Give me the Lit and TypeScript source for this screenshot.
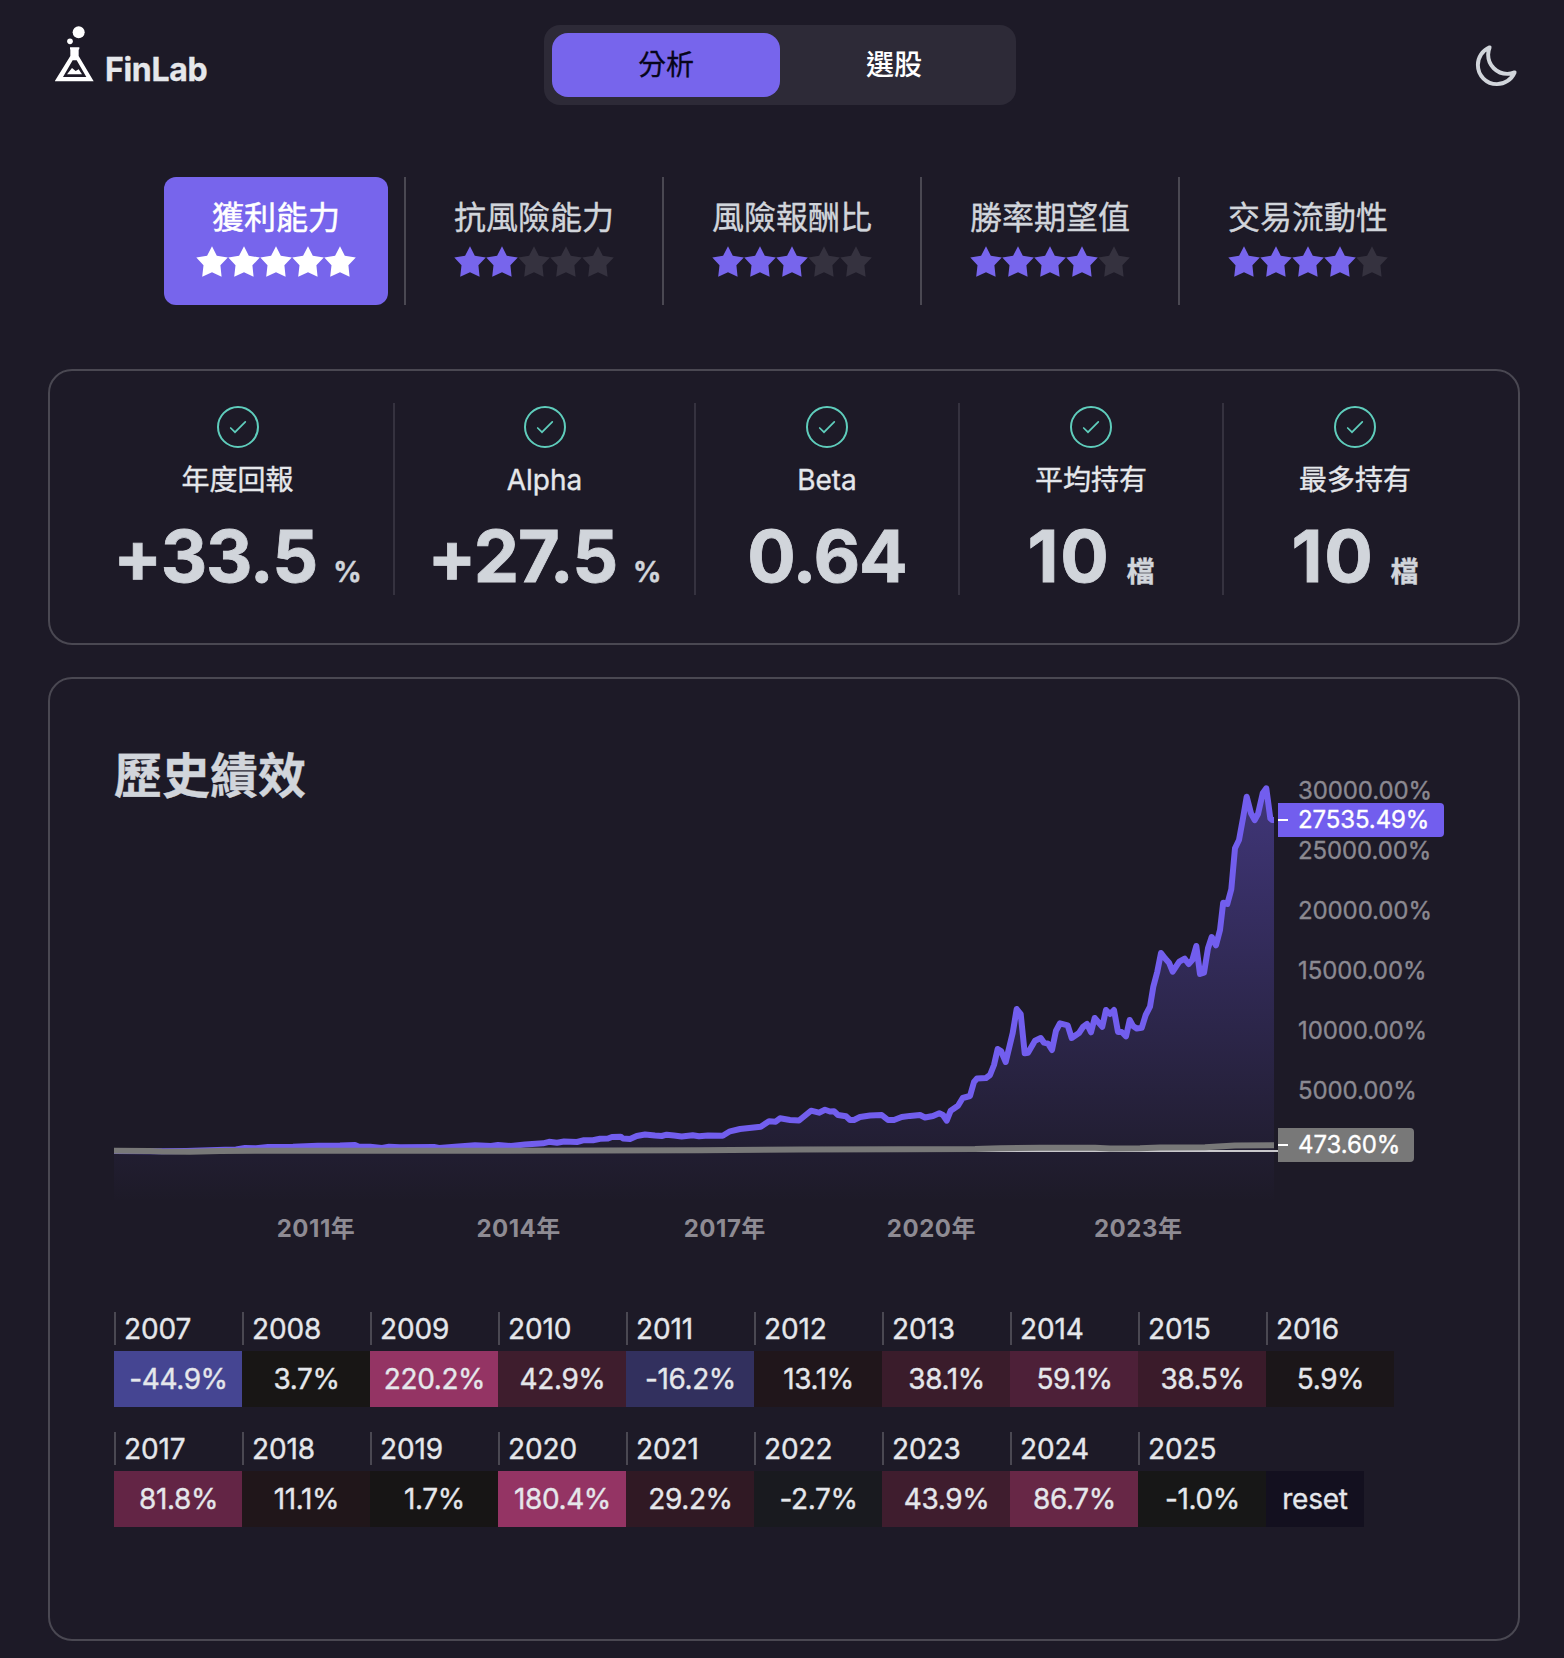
import { LitElement, html, svg, css } from "lit";
import { customElement, property } from "lit/decorators.js";
import { classMap } from "lit/directives/class-map.js";
import { styleMap } from "lit/directives/style-map.js";

type Point = [number, number];

interface Rating { name: string; stars: number; active?: boolean }
interface Stat { label: string; value: string; unit?: string }
interface Year { year: string; value: string; color: string }

const RATINGS: Rating[] = [
  { name: "獲利能力", stars: 5, active: true },
  { name: "抗風險能力", stars: 2 },
  { name: "風險報酬比", stars: 3 },
  { name: "勝率期望值", stars: 4 },
  { name: "交易流動性", stars: 4 },
];

const STATS: Stat[] = [
  { label: "年度回報", value: "+33.5", unit: "%" },
  { label: "Alpha", value: "+27.5", unit: "%" },
  { label: "Beta", value: "0.64" },
  { label: "平均持有", value: "10", unit: "檔" },
  { label: "最多持有", value: "10", unit: "檔" },
];

const YEARS: Year[] = [
  { year: "2007", value: "-44.9%", color: "#454592" },
  { year: "2008", value: "3.7%", color: "#181615" },
  { year: "2009", value: "220.2%", color: "#943464" },
  { year: "2010", value: "42.9%", color: "#3e1d2d" },
  { year: "2011", value: "-16.2%", color: "#32305e" },
  { year: "2012", value: "13.1%", color: "#20161b" },
  { year: "2013", value: "38.1%", color: "#3a1c2b" },
  { year: "2014", value: "59.1%", color: "#4d2038" },
  { year: "2015", value: "38.5%", color: "#3a1b2a" },
  { year: "2016", value: "5.9%", color: "#1b1619" },
  { year: "2017", value: "81.8%", color: "#632545" },
  { year: "2018", value: "11.1%", color: "#20161a" },
  { year: "2019", value: "1.7%", color: "#171515" },
  { year: "2020", value: "180.4%", color: "#943464" },
  { year: "2021", value: "29.2%", color: "#301924" },
  { year: "2022", value: "-2.7%", color: "#191a1f" },
  { year: "2023", value: "43.9%", color: "#3f1d2e" },
  { year: "2024", value: "86.7%", color: "#672746" },
  { year: "2025", value: "-1.0%", color: "#171717" },
];

const AXIS = ["30000.00%", "25000.00%", "20000.00%", "15000.00%", "10000.00%", "5000.00%"];

const TIMES: [number, string][] = [
  [316, "2011年"], [518.6, "2014年"], [724.8, "2017年"], [931.4, "2020年"], [1138.2, "2023年"],
];

const STRATEGY: Point[] = [
  [114, 1151], [162, 1151.3], [186, 1151], [225, 1149.7], [236, 1149.5], [245, 1148], [256, 1148.3], [268, 1147],
  [293, 1146.8], [318, 1145.7], [340, 1145.5], [355, 1145], [359, 1146.7], [370, 1146.8], [382, 1148],
  [389, 1146.8], [400, 1147.2], [434, 1147], [439, 1148], [455, 1146.8], [475, 1145.3], [491, 1146],
  [498, 1145], [511, 1146], [525, 1144.5], [543, 1143.3], [549, 1141.8], [557, 1142.7], [564, 1141.5],
  [577, 1142], [584, 1140.2], [593, 1140.2], [600, 1138.7], [608, 1138.5], [612, 1137], [620.7, 1136.7],
  [623, 1138.5], [630, 1139], [636.7, 1136], [645, 1134.5], [655, 1135.5], [661.7, 1136], [666.7, 1134.7],
  [674, 1135.5], [681.7, 1136.5], [692.7, 1135.3], [699, 1136.3], [708, 1135.5], [722.7, 1135.7],
  [730, 1131.3], [740, 1129], [760.7, 1126.7], [769, 1121.3], [775.7, 1121.7], [780, 1118.3], [790, 1120],
  [799, 1120.5], [811, 1110.7], [819, 1112.7], [825, 1109.7], [830, 1111.5], [834, 1111.3], [838, 1115],
  [846, 1116.3], [850, 1120], [854, 1120], [860, 1117], [870, 1115.5], [881.7, 1115], [888, 1120],
  [894, 1120], [901.7, 1117], [910, 1115.9], [920, 1115], [925, 1117.5], [933, 1116], [939.3, 1113.3],
  [943, 1115], [946.7, 1120.7], [950.7, 1110.7], [958, 1105.7], [962.7, 1098], [970, 1096], [974, 1082],
  [977, 1078.5], [986, 1078], [990, 1075], [994, 1065], [997.7, 1049], [1001, 1051], [1005.7, 1062],
  [1012.7, 1033], [1016.7, 1009], [1020.7, 1014], [1024.7, 1053.3], [1028, 1052.7], [1035, 1040.7],
  [1040.7, 1038], [1044, 1042.7], [1048, 1043.7], [1052, 1050], [1056, 1030.7], [1060, 1023.3],
  [1067.7, 1025.3], [1071.7, 1038], [1079, 1033], [1083, 1027], [1087, 1024], [1091, 1032.3],
  [1094.7, 1018], [1102.3, 1026.7], [1106, 1010], [1110, 1014], [1114, 1010], [1118, 1032],
  [1121.7, 1032], [1126, 1036.3], [1129.7, 1020], [1133, 1026], [1136.7, 1028.5], [1141.7, 1027.8],
  [1145.7, 1015], [1150, 1006.7], [1153.3, 986.7], [1157.3, 971.7], [1161, 953], [1165, 958.3],
  [1169, 962.7], [1172.7, 971.7], [1179.3, 961.7], [1184.7, 958.7], [1188.7, 964], [1192.3, 960],
  [1196.3, 946], [1200, 974], [1204, 972.7], [1208, 948.3], [1211.7, 937], [1216, 945.3], [1220, 930],
  [1223.2, 902.7], [1227.3, 904], [1231.3, 889.3], [1235, 848.3], [1239, 840], [1243, 818.3],
  [1246.7, 796.7], [1251, 813.3], [1254.7, 820], [1258, 814], [1262.7, 793.3], [1266.3, 788.3],
  [1270.3, 818.3], [1272, 820], [1274, 820],
];

const BENCHMARK: Point[] = [
  [114, 1150.7], [150, 1150.9], [162, 1151.6], [190, 1151.7], [220, 1151], [260, 1150.8], [440, 1150.8],
  [600, 1150.5], [700, 1150.3], [800, 1149.6], [900, 1149.3], [975, 1149], [1000, 1148.3], [1040, 1147.7],
  [1095, 1147.8], [1110, 1148.4], [1140, 1148.2], [1160, 1147.5], [1205, 1147.3], [1235, 1145.5], [1274, 1145.3],
];

const toPath = (pts: Point[]) => "M" + pts.map((p) => p.join(" ")).join("L");

const FONT = css`"Inter", "Noto Sans CJK TC", sans-serif`;

@customElement("star-rating")
class StarRating extends LitElement {
  @property({ type: Number }) value = 0;

  static styles = css`
    :host { display: flex; }
    .star { width: 32px; height: 32px; display: block; fill: var(--star-off, #35323f); }
    .on { fill: var(--star-on, #7765ec); }
  `;

  render() {
    return [1, 2, 3, 4, 5].map((n) => html`
      <svg class=${classMap({ star: true, on: n <= this.value })} viewBox="0 0 32 32">
        <path d="M16 .3 20.8 9.7 31.8 11.6 24.4 19.3 25.6 30.8 16 26.3 6.2 30.8 7.5 19.3.3 11.6 11.1 9.7Z"></path>
      </svg>`);
  }
}

@customElement("top-bar")
class TopBar extends LitElement {
  static styles = css`
    :host { display: grid; grid-template-columns: 489px 472px 1fr; align-items: start; padding: 25px 45px 0 55px; height: 152px; box-sizing: border-box; }
    .brand { display: flex; align-items: flex-start; height: 57px; gap: 11px; }
    .flask { width: 39px; height: 56px; display: block; fill: #fff; margin-top: 1px; }
    .name { font-size: 32px; font-weight: 700; line-height: 34px; margin-top: 28px; color: #e5e7eb; letter-spacing: -0.3px; }
    .switch { display: flex; background: #2d2a37; border-radius: 16px; padding: 8px; height: 80px; box-sizing: border-box; }
    .option { flex: 1; line-height: 65px; height: 64px; text-align: center; border-radius: 16px; font-size: 28px; font-weight: 500; color: #fff; -webkit-text-stroke: 0; }
    .selected { background: #7765ec; color: #07051a; font-weight: 400; -webkit-text-stroke: 0.3px; }
    .moon { width: 47px; height: 47px; display: block; justify-self: end; margin-top: 18px; }
  `;

  render() {
    return html`
      <div class="brand">
        <svg class="flask" viewBox="73 77 117 168">
          <circle cx="144" cy="96" r="18"></circle>
          <circle cx="118" cy="123" r="8.5"></circle>
          <path fill-rule="evenodd" d="M118 141H146V146L144 148V167L189 243H72L119 167V148L118 146ZM126 180 97 230H167L138 180Z"></path>
          <path d="M109 222 124 203 135 212 144 207 154 222Z"></path>
        </svg>
        <span class="name">FinLab</span>
      </div>
      <div class="switch">
        <div class="option selected">分析</div>
        <div class="option">選股</div>
      </div>
      <svg class="moon" viewBox="0 0 24 24" fill="none" stroke="#d1d5db" stroke-width="2" stroke-linecap="round" stroke-linejoin="round">
        <path d="M21.752 15.002A9.72 9.72 0 0 1 18 15.75c-5.385 0-9.75-4.365-9.75-9.75 0-1.33.266-2.597.748-3.752A9.753 9.753 0 0 0 3 11.25C3 16.635 7.365 21 12.75 21a9.753 9.753 0 0 0 9.002-5.998Z"></path>
      </svg>`;
  }
}

@customElement("rating-tabs")
class RatingTabs extends LitElement {
  static styles = css`
    :host { display: flex; padding: 25px 0 0 148px; }
    .cell { padding: 0 16px; border-right: 2px solid #4a4852; }
    .cell:last-child { border-right: 0; }
    .tab { width: 224px; height: 128px; box-sizing: border-box; border-radius: 12px; padding-top: 17px; display: flex; flex-direction: column; align-items: center; color: #d1d5db; }
    .name { font-size: 32px; line-height: 47px; height: 51.5px; }
    .active { background: #7765ec; color: #fff; --star-on: #fff; -webkit-text-stroke: 0.5px; }
  `;

  render() {
    return RATINGS.map((r) => html`
      <div class="cell">
        <div class=${classMap({ tab: true, active: !!r.active })}>
          <div class="name">${r.name}</div>
          <star-rating .value=${r.stars}></star-rating>
        </div>
      </div>`);
  }
}

@customElement("stat-card")
class StatCard extends LitElement {
  static styles = css`
    :host { display: grid; grid-template-columns: 313px 301px 264px 264px 262px; box-sizing: border-box; height: 276px; border: 2px solid #4a4852; border-radius: 24px; padding: 32px; }
    .stat { display: flex; flex-direction: column; align-items: center; height: 192px; box-sizing: border-box; border-right: 2px solid #35323f; padding-top: 3px; }
    .stat:last-child { border-right: 0; }
    .check { width: 42px; height: 42px; flex: none; display: block; fill: none; stroke: #5fcdbc; }
    .label { font-size: 28px; line-height: 42px; height: 40px; flex: none; margin-top: 11px; color: #e5e7eb; }
    .figure { display: flex; align-items: baseline; gap: 16px; height: 72px; flex: none; margin-top: 21px; color: #d1d5db; font-weight: 700; line-height: 72px; }
    .value { font-size: 72px; letter-spacing: -1.1px; -webkit-text-stroke: 0.8px; }
    .whole { letter-spacing: 1.6px; }
    .unit { font-size: 28px; line-height: 28px; }
  `;

  render() {
    return STATS.map((s) => html`
      <div class="stat">
        <svg class="check" viewBox="-21 -21 42 42">
          <circle r="20" stroke-width="2"></circle>
          <path d="M-7.3 1 -3 5.2 7.3-5.2" stroke-width="1.7" stroke-linecap="round"></path>
        </svg>
        <div class="label">${s.label}</div>
        <div class="figure">
          <span class=${classMap({ value: true, whole: !s.value.includes(".") })}>${s.value}</span>
          ${s.unit ? html`<span class="unit">${s.unit}</span>` : null}
        </div>
      </div>`);
  }
}

@customElement("performance-chart")
class PerformanceChart extends LitElement {
  static styles = css`
    :host { display: flex; height: 490px; }
    .plot { width: 1164px; height: 490px; display: block; flex: none; }
    .time { font-family: ${FONT}; font-size: 24px; font-weight: 700; letter-spacing: 0.5px; fill: #8e8b93; text-anchor: middle; -webkit-text-stroke: 0; }
    .axis { position: relative; width: 180px; padding: 1px 0 0 20px; }
    .tick { height: 60px; line-height: 60px; font-size: 24px; letter-spacing: -0.1px; color: #8b8991; }
    .tag { position: absolute; left: 0; height: 34px; line-height: 34px; font-size: 24px; letter-spacing: -0.1px; color: #fff; display: flex; align-items: center; gap: 10px; border-radius: 0 4px 4px 0; box-sizing: border-box; }
    .tag::before { content: ""; width: 10px; height: 2px; background: #fff; }
    .strategy { top: 43px; width: 166px; background: #725eee; }
    .benchmark { top: 368px; width: 136px; background: #787878; }
  `;

  render() {
    return html`
      <svg class="plot" viewBox="114 760 1164 490">
        <defs>
          <linearGradient id="fade" gradientUnits="userSpaceOnUse" x1="0" y1="780" x2="0" y2="1204">
            <stop offset="0" stop-color="#725eee" stop-opacity="0.42"></stop>
            <stop offset="1" stop-color="#725eee" stop-opacity="0"></stop>
          </linearGradient>
        </defs>
        <path d="${toPath(STRATEGY)}V1200H114Z" fill="url(#fade)"></path>
        <path d=${toPath(STRATEGY)} fill="none" stroke="#725eee" stroke-width="6" stroke-linejoin="round"></path>
        <path d="M114 1151H1278" stroke="#c9c8cc" stroke-width="2"></path>
        <path d=${toPath(BENCHMARK)} fill="none" stroke="#787878" stroke-width="6" stroke-linejoin="round"></path>
        ${TIMES.map(([x, label]) => svg`<text class="time" x=${x} y="1237">${label}</text>`)}
      </svg>
      <div class="axis">
        ${AXIS.map((t) => html`<div class="tick">${t}</div>`)}
        <div class="tag strategy">27535.49%</div>
        <div class="tag benchmark">473.60%</div>
      </div>`;
  }
}

@customElement("year-grid")
class YearGrid extends LitElement {
  static styles = css`
    :host { display: grid; grid-template-columns: repeat(10, 128px); row-gap: 25px; font-size: 28px; color: #e5e7eb; }
    .cell { display: flex; flex-direction: column; height: 95px; }
    .year { height: 33px; line-height: 35px; border-left: 2px solid #4a4852; padding-left: 8px; margin-bottom: 6px; letter-spacing: -0.1px; }
    .value { height: 56px; line-height: 57px; text-align: center; letter-spacing: -0.4px; text-indent: 1px; }
    .reset { align-self: end; width: 98px; height: 56px; line-height: 57px; text-align: center; background: #13101f; letter-spacing: -0.2px; }
  `;

  render() {
    return html`
      ${YEARS.map((y) => html`
        <div class="cell">
          <div class="year">${y.year}</div>
          <div class="value" style=${styleMap({ background: y.color })}>${y.value}</div>
        </div>`)}
      <div class="reset">reset</div>`;
  }
}

@customElement("app-root")
class AppRoot extends LitElement {
  static styles = css`
    :host { display: block; box-sizing: border-box; width: 100%; height: 1658px; overflow: hidden; background: #1d1a27; font-family: ${FONT}; -webkit-text-stroke: 0.35px; }
    .cards { display: flex; flex-direction: column; gap: 32px; padding: 64px 44px 0 48px; }
    .history { box-sizing: border-box; height: 964px; border: 2px solid #4a4852; border-radius: 24px; padding: 68px 0 0 64px; }
    .stage { display: grid; }
    .title, .chart { grid-area: 1 / 1; }
    .title { margin: 0; font-size: 48px; font-weight: 700; line-height: 58px; color: #d1d5db; align-self: start; }
    .chart { margin-top: 13px; }
    .years { margin-top: 62px; }
  `;

  render() {
    return html`
      <top-bar></top-bar>
      <rating-tabs></rating-tabs>
      <div class="cards">
        <stat-card></stat-card>
        <section class="history">
          <div class="stage">
            <h2 class="title">歷史績效</h2>
            <performance-chart class="chart"></performance-chart>
          </div>
          <year-grid class="years"></year-grid>
        </section>
      </div>`;
  }
}
